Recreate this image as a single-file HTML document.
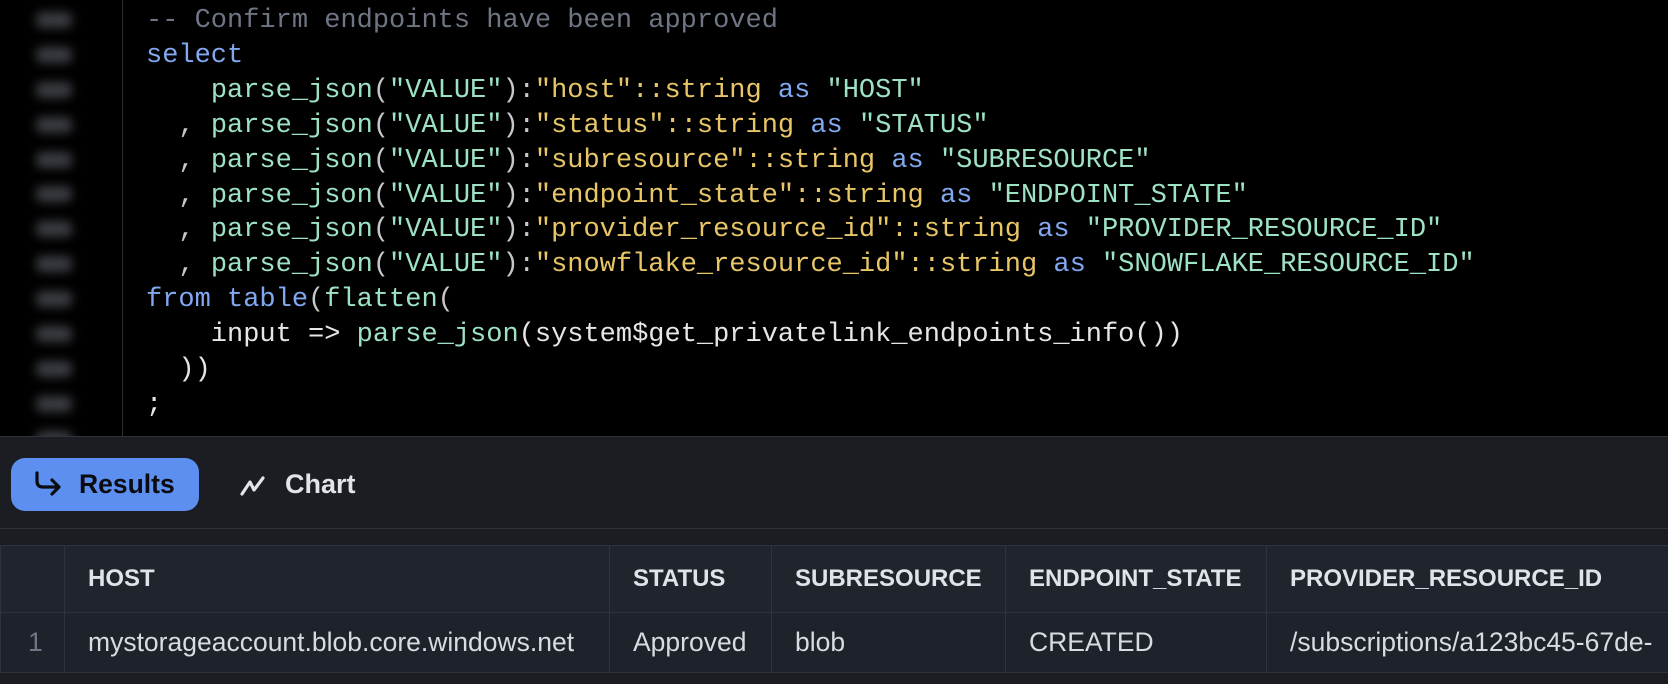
<!DOCTYPE html>
<html><head><meta charset="utf-8"><style>
*{margin:0;padding:0;box-sizing:border-box}
body{width:1668px;height:684px;overflow:hidden;background:#1b1d22;font-family:"Liberation Sans",sans-serif;position:relative}
#ed{position:absolute;left:0;top:0;width:1668px;height:436px;background:#000;overflow:hidden}
#gut{position:absolute;left:122px;top:0;width:1px;height:436px;background:#2a2d33}
.ln{position:absolute;left:36px;width:36px;height:16px;background:#3a3c42;border-radius:6px;filter:blur(5px)}
pre{position:absolute;left:146px;top:4px;font-family:"Liberation Mono",monospace;font-size:27px;line-height:34.9px;color:#e6e6e6}
.c{color:#6e7584}.k{color:#82a8f0}.f{color:#9ee2c4}.s{color:#e8c667}.p{color:#c8c8c8}
#tabs{position:absolute;top:436px;left:0;width:1668px;height:93px;border-top:1px solid #2e323a;border-bottom:1px solid #2e323a}
#res{position:absolute;left:11px;top:21px;width:188px;height:53px;background:#5c8ff0;border-radius:14px;color:#0a0c10;font-weight:bold;font-size:26.5px;line-height:53px;padding-left:68px}
#chart{position:absolute;left:285px;top:21px;line-height:53px;color:#e2e4e8;font-weight:bold;font-size:27px}
table{position:absolute;top:545px;left:0;border-collapse:collapse;table-layout:fixed;width:1700px}
td,th{border:1px solid #2e333d;padding-left:23px;text-align:left;white-space:nowrap;overflow:hidden}
th{background:#20242c;color:#e0e3e8;font-weight:bold;height:67px;font-size:24px}
td{background:#1e222a;color:#d8dbe0;height:60px;font-size:26.5px}
</style></head><body>
<div id="ed">
<div class="ln" style="top:12px"></div><div class="ln" style="top:47px"></div><div class="ln" style="top:82px"></div><div class="ln" style="top:117px"></div><div class="ln" style="top:152px"></div><div class="ln" style="top:186px"></div><div class="ln" style="top:221px"></div><div class="ln" style="top:256px"></div><div class="ln" style="top:291px"></div><div class="ln" style="top:326px"></div><div class="ln" style="top:361px"></div><div class="ln" style="top:396px"></div><div class="ln" style="top:431px"></div>
<div id="gut"></div>
<pre><span class="c">-- Confirm endpoints have been approved</span>
<span class="k">select</span>
    <span class="f">parse_json</span><span class="p">(</span><span class="f">"VALUE"</span><span class="p">):</span><span class="s">"host"::string</span> <span class="k">as</span> <span class="f">"HOST"</span>
  <span class="p">,</span> <span class="f">parse_json</span><span class="p">(</span><span class="f">"VALUE"</span><span class="p">):</span><span class="s">"status"::string</span> <span class="k">as</span> <span class="f">"STATUS"</span>
  <span class="p">,</span> <span class="f">parse_json</span><span class="p">(</span><span class="f">"VALUE"</span><span class="p">):</span><span class="s">"subresource"::string</span> <span class="k">as</span> <span class="f">"SUBRESOURCE"</span>
  <span class="p">,</span> <span class="f">parse_json</span><span class="p">(</span><span class="f">"VALUE"</span><span class="p">):</span><span class="s">"endpoint_state"::string</span> <span class="k">as</span> <span class="f">"ENDPOINT_STATE"</span>
  <span class="p">,</span> <span class="f">parse_json</span><span class="p">(</span><span class="f">"VALUE"</span><span class="p">):</span><span class="s">"provider_resource_id"::string</span> <span class="k">as</span> <span class="f">"PROVIDER_RESOURCE_ID"</span>
  <span class="p">,</span> <span class="f">parse_json</span><span class="p">(</span><span class="f">"VALUE"</span><span class="p">):</span><span class="s">"snowflake_resource_id"::string</span> <span class="k">as</span> <span class="f">"SNOWFLAKE_RESOURCE_ID"</span>
<span class="k">from</span> <span class="k">table</span><span class="p">(</span><span class="f">flatten</span><span class="p">(</span>
    input =&gt; <span class="f">parse_json</span>(system$get_privatelink_endpoints_info())
  ))
;</pre>
</div>
<div id="tabs">
<div id="res"><svg style="position:absolute;left:22px;top:13px" width="30" height="28" viewBox="0 0 30 28"><path d="M4 2 V10 Q4 16 10 16 H26 M19 9 L26 16 L19 23" fill="none" stroke="#0a0c10" stroke-width="3.2" stroke-linecap="round" stroke-linejoin="round"/></svg>Results</div>
<svg style="position:absolute;left:239px;top:38px" width="28" height="22" viewBox="0 0 28 22"><path d="M3 19 L11 7 L15 15 L24 3" fill="none" stroke="#e2e4e8" stroke-width="3.2" stroke-linecap="round" stroke-linejoin="round"/></svg>
<div id="chart">Chart</div>
</div>
<table>
<colgroup><col style="width:64px"><col style="width:545px"><col style="width:162px"><col style="width:234px"><col style="width:261px"><col style="width:434px"></colgroup>
<tr><th style="padding:0"></th><th>HOST</th><th>STATUS</th><th>SUBRESOURCE</th><th>ENDPOINT_STATE</th><th>PROVIDER_RESOURCE_ID</th></tr>
<tr><td style="padding-left:27px;color:#6e7584">1</td><td>mystorageaccount.blob.core.windows.net</td><td>Approved</td><td>blob</td><td>CREATED</td><td>/subscriptions/a123bc45-67de-</td></tr>
</table>
</body></html>
